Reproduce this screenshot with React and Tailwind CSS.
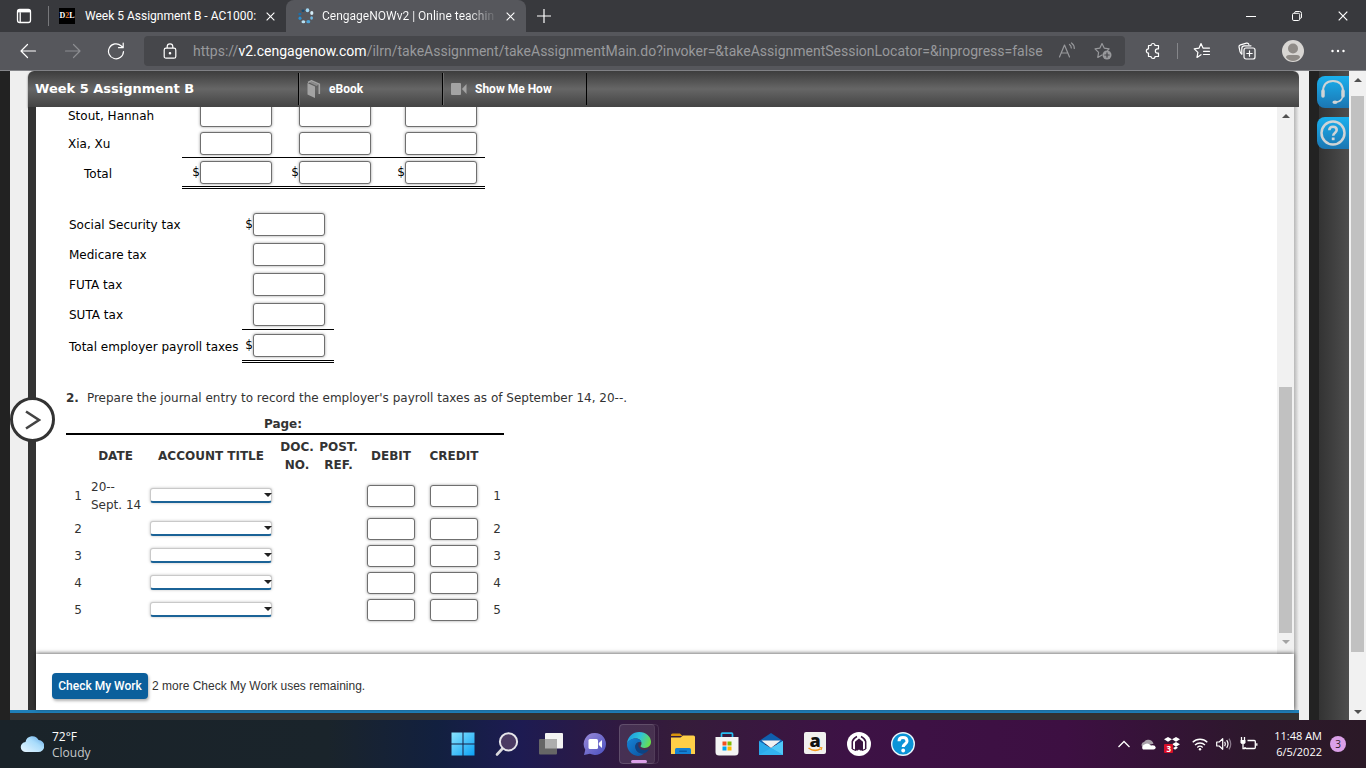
import clsx from "clsx";

const taxRows = [
  { id: "social", label: "Social Security tax", dollar: true },
  { id: "medicare", label: "Medicare tax" },
  { id: "futa", label: "FUTA tax" },
  { id: "suta", label: "SUTA tax" },
  { id: "total", label: "Total employer payroll taxes", dollar: true, total: true },
];

const earningRows = [
  { name: "Stout, Hannah" },
  { name: "Xia, Xu" },
  { name: "Total", total: true },
];

const journalRows = [1, 2, 3, 4, 5];

const AmountInput = ({ id, label, small }) => (
  <input
    id={id}
    type="text"
    aria-label={label}
    className={clsx(
      "block rounded-[3px] border border-[#6f6f6f] bg-white px-1 shadow-[0_0_3px_rgba(0,0,0,0.4)] outline-none",
      small ? "mx-auto h-[22px] w-12" : "h-[23px] w-[72px]"
    )}
  />
);

const Triangle = ({ up, className }) => (
  <svg viewBox="0 0 8 4" className={clsx("h-1 w-2", className)} fill="currentColor">
    <path d={up ? "M0 4L4 0L8 4Z" : "M0 0L4 4L8 0Z"} />
  </svg>
);

const ScrollButton = ({ up, className }) => (
  <button
    type="button"
    aria-label={up ? "Scroll up" : "Scroll down"}
    className={clsx("flex h-[17px] w-full shrink-0 items-center justify-center", className)}
  >
    <Triangle up={up} />
  </button>
);

/* ---------- browser ---------- */

const CloseIcon = ({ className }) => (
  <svg viewBox="0 0 10 10" className={className} fill="none" stroke="currentColor" strokeWidth="1.2">
    <path d="M.7.7l8.6 8.6M9.3.7L.7 9.3" />
  </svg>
);

const TabStrip = () => (
  <div className="flex h-8 shrink-0 bg-[#38393d] text-white">
    <div className="flex w-12 shrink-0 items-center justify-center">
      <button type="button" aria-label="Tab actions">
        <svg viewBox="0 0 16 16" className="size-4" fill="none" stroke="currentColor" strokeWidth="1.3">
          <rect x="1.5" y="1.5" width="13" height="13" rx="2.2" />
          <path d="M4.200 4.200v10" strokeWidth="1.300" />
          <path d="M2 3.200h12" strokeWidth="2.400" />
        </svg>
      </button>
    </div>
    <div className="flex w-[238px] shrink-0 items-center pr-1.5">
      <span className="mr-2.5 h-5 w-px shrink-0 bg-[#77787b]" />
      <span className="flex size-4 shrink-0 items-center justify-center bg-black font-['Liberation_Serif'] text-[8px] font-bold leading-none text-white">
        D<span className="text-[#e8762d]">2</span>L
      </span>
      <span className="ml-2.5 whitespace-nowrap font-['Roboto'] text-xs">Week 5 Assignment B - AC1000:</span>
      <button type="button" aria-label="Close tab" className="ml-auto flex size-5 items-center justify-center">
        <CloseIcon className="size-[9px]" />
      </button>
    </div>
    <div className="flex w-[240px] shrink-0 items-center rounded-t-lg bg-[#56575c] pl-3 pr-1.5">
      <svg viewBox="0 0 16 16" className="size-4 shrink-0">
        <ellipse cx="9.5" cy="2.2" rx="1.8" ry="2" fill="#9fd6f2" />
        <ellipse cx="13.8" cy="5" rx="1.6" ry="1.9" fill="#d6effa" />
        <ellipse cx="13.6" cy="10" rx="1.4" ry="1.8" fill="#6fb7e0" />
        <ellipse cx="10.3" cy="13.7" rx="2" ry="1.6" fill="#4fa5d8" />
        <ellipse cx="5.4" cy="13.7" rx="1.9" ry="1.5" fill="#b9e2f5" />
        <ellipse cx="2" cy="10.3" rx="1.5" ry="1.8" fill="#2a8fd0" />
        <ellipse cx="1.9" cy="6" rx="1.6" ry="1.2" fill="#1c6ea8" />
        <ellipse cx="5" cy="2.8" rx="1.5" ry="1.3" fill="#174a70" />
      </svg>
      <span className="ml-2 whitespace-nowrap bg-linear-to-r from-white from-85% to-[#6b6c70] bg-clip-text font-['Roboto'] text-xs text-transparent">
        CengageNOWv2 | Online teachin
      </span>
      <button type="button" aria-label="Close tab" className="ml-auto flex size-5 items-center justify-center">
        <CloseIcon className="size-[9px]" />
      </button>
    </div>
    <button type="button" aria-label="New tab" className="flex w-9 items-center justify-center">
      <svg viewBox="0 0 14 14" className="size-3.5" fill="none" stroke="currentColor" strokeWidth="1.2">
        <path d="M7 0v14M0 7h14" />
      </svg>
    </button>
    <div className="ml-auto flex">
      <button type="button" aria-label="Minimize" className="flex w-[46px] items-center justify-center">
        <span className="h-px w-2.5 bg-white" />
      </button>
      <button type="button" aria-label="Restore" className="flex w-[46px] items-center justify-center">
        <svg viewBox="0 0 10 10" className="size-2.5" fill="none" stroke="currentColor" strokeWidth="1">
          <rect x=".5" y="2.3" width="7.2" height="7.2" rx="1.3" />
          <path d="M2.6 2V1.8Q2.6.5 4 .5h3.6Q9.5.5 9.5 2.4V6q0 1.4-1.3 1.4" />
        </svg>
      </button>
      <button type="button" aria-label="Close" className="flex w-[46px] items-center justify-center">
        <CloseIcon className="size-2.5" />
      </button>
    </div>
  </div>
);

const ToolButton = ({ label, children, className }) => (
  <button type="button" aria-label={label} className={clsx("flex shrink-0 items-center justify-center", className)}>
    <svg viewBox="0 0 18 18" className="size-[18px]" fill="none" stroke="currentColor" strokeWidth="1.2" strokeLinejoin="round" strokeLinecap="round">
      {children}
    </svg>
  </button>
);

const Toolbar = () => (
  <div className="flex h-[39px] shrink-0 items-center border-b border-[#85868a] bg-[#56575c] pl-1 text-white">
    <ToolButton label="Back" className="w-12">
      <path d="M16.500 9H2M8.500 2.500L2 9l6.500 6.500" />
    </ToolButton>
    <ToolButton label="Forward" className="w-[42px] text-[#8c8d91]">
      <path d="M1.500 9H16M9.500 2.500L16 9l-6.500 6.500" />
    </ToolButton>
    <ToolButton label="Refresh" className="w-11">
      <path d="M16.500 9.500A7.500 7.500 0 1 1 14 3.700L16 5.500M16.200 1v4.700h-4.700" />
    </ToolButton>
    <div className="ml-1.5 flex h-[30px] min-w-0 flex-1 items-center rounded bg-[#46474b] pl-[19px]">
      <svg viewBox="0 0 14 16" className="h-4 w-3.5 shrink-0" fill="none" stroke="currentColor" strokeWidth="1.2">
        <rect x="1.200" y="5.200" width="11.600" height="10" rx="1.800" />
        <path d="M4.200 5V3.600a2.800 2.800 0 0 1 5.600 0V5" />
        <circle cx="7" cy="10.200" r=".7" fill="currentColor" />
      </svg>
      <div className="ml-4 min-w-0 flex-1 overflow-hidden whitespace-nowrap font-['Roboto'] text-sm text-[#98999c]">
        https://<span className="text-white">v2.cengagenow.com</span>
        /ilrn/takeAssignment/takeAssignmentMain.do?invoker=&amp;takeAssignmentSessionLocator=&amp;inprogress=false
      </div>
      <ToolButton label="Read aloud" className="w-9 text-[#98999c]">
        <path d="M1.500 15L6.500 3l5 12M3.200 11h6.600M11.500 2.500q1.800 1.300 1.800 3.500M13.500 1q2.800 2 2.800 5.500" />
      </ToolButton>
      <ToolButton label="Add to favorites" className="mr-1 w-9 text-[#98999c]">
        <path d="M8 13L3.800 15.400l.8-5L1 6.900l4.900-.8L8 1.500l2.200 4.600 4.900.8-1.500 1.500" />
        <circle cx="13" cy="13" r="4.500" fill="currentColor" stroke="none" />
        <path d="M13 10.800v4.400M10.800 13h4.400" stroke="#46474b" />
      </ToolButton>
    </div>
    <ToolButton label="Extensions" className="ml-1.5 w-11">
      <path d="M4.500 3.500H7a2 2 0 0 1 4 0h3.500v3.300h-1a2 2 0 0 0 0 4.300h1v3.400H11a2 2 0 0 1-4 0H4.500v-3.400a2 2 0 0 1 0-4.300Z" />
    </ToolButton>
    <span className="mx-0.5 h-4 w-px bg-[#85868a]" />
    <ToolButton label="Favorites" className="w-11">
      <path d="M8 12.700L4 15.400l.9-5L1.200 6.900l4.900-.8L8 1.500l2 4.600h6.500M10.500 9.300h6M10.500 12.500h6" />
    </ToolButton>
    <ToolButton label="Collections" className="w-[46px]">
      <rect x="6" y="6" width="11" height="11" rx="2" />
      <path d="M11.500 8.800v5.400M8.800 11.500h5.400M3.800 12Q2.300 11 2 9.600L1 4.800Q.8 3.200 2.400 2.800L8.500 1.200q1.800-.4 2.400 1.300" />
      <path d="M3.800 12V6.500q0-2.700 2.700-2.700H13" />
    </ToolButton>
    <button type="button" aria-label="Profile" className="flex w-[46px] justify-center">
      <svg viewBox="0 0 22 22" className="size-[22px]">
        <circle cx="11" cy="11" r="11" fill="#d8d6d3" />
        <circle cx="11" cy="8.500" r="5" fill="#8f8b87" />
        <path d="M4 17.500q0-2.500 3-2.500h8q3 0 3 2.500A9 9 0 0 1 11 21a9 9 0 0 1-7-3.500Z" fill="#8f8b87" />
      </svg>
    </button>
    <ToolButton label="Settings and more" className="mr-1.5 w-11">
      <path d="M3.500 9h.01M9 9h.01M14.500 9h.01" strokeWidth="2.400" />
    </ToolButton>
  </div>
);

/* ---------- assignment ---------- */

const HeaderLink = ({ icon, children }) => (
  <a
    href="#"
    className="flex w-36 items-center gap-2 border-l border-black pl-2 font-['Roboto'] text-xs font-bold shadow-[inset_1px_0_0_#6b6b6b]"
  >
    {icon}
    {children}
  </a>
);

const AppHeader = () => (
  <header className="flex h-9 shrink-0 rounded-t-md bg-linear-to-b from-[#3d3d3d] via-[#666] to-[#444] py-0.5 text-white shadow-[0_1px_2px_rgba(0,0,0,0.6)]">
    <h1 className="flex w-[270px] items-center pl-[7px] font-['DejaVu_Sans',Verdana,sans-serif] text-[13px] font-bold">
      Week 5 Assignment B
    </h1>
    <HeaderLink
      icon={
        <svg viewBox="0 0 14 18" className="h-[18px] w-3.5">
          <path d="M.5 3L8 6.500V18L.5 14.500Z" fill="#a3a3a3" />
          <path d="M1 2.500L4.500 .800l7.800 3.500V14" fill="none" stroke="#a3a3a3" strokeWidth="1.600" />
          <path d="M2 2.500L4.500 1.500 12 4.500 9.500 6Z" fill="#8a8a8a" />
        </svg>
      }
    >
      eBook
    </HeaderLink>
    <HeaderLink
      icon={
        <svg viewBox="0 0 16 12" className="h-3 w-4" fill="#a3a3a3">
          <rect y="0" width="10" height="12" rx="1" />
          <path d="M11 6l4.500-5v10Z" />
        </svg>
      }
    >
      Show Me How
    </HeaderLink>
    <span className="border-l border-black" />
  </header>
);

const EarningsTable = () => (
  <table className="ml-0.5 w-[417px] table-fixed border-separate border-spacing-0 text-black">
    <colgroup>
      <col className="w-[114px]" />
      <col className="w-[90px]" />
      <col className="w-[99px]" />
      <col className="w-[114px]" />
    </colgroup>
    <tbody>
      {earningRows.map((row) => (
        <tr key={row.name}>
          <th scope="row" className={clsx("pt-0.5 text-left font-normal", row.total && "pl-4")}>
            {row.name}
          </th>
          {[1, 2, 3].map((col) => (
            <td
              key={col}
              className={clsx(
                row.total ? "h-8 border-t border-b-3 border-t-black border-b-black [border-bottom-style:double]" : "h-7",
                col === 3 && "pr-2"
              )}
            >
              <div className="flex items-center justify-end">
                {row.total && "$"}
                <AmountInput label={`${row.name}, column ${col}`} />
              </div>
            </td>
          ))}
        </tr>
      ))}
    </tbody>
  </table>
);

const TaxTable = () => (
  <table className="mt-5 ml-[3px] w-[265px] table-fixed border-separate border-spacing-0 text-black">
    <colgroup>
      <col className="w-[173px]" />
      <col className="w-[92px]" />
    </colgroup>
    <tbody>
      {taxRows.map((row) => (
        <tr key={row.id}>
          <th scope="row" className="whitespace-nowrap pt-0.5 text-left font-normal">
            <label htmlFor={row.id}>{row.label}</label>
          </th>
          <td
            className={clsx(
              "pr-[9px]",
              row.total ? "h-[34px] border-t border-b-3 border-t-black border-b-black [border-bottom-style:double]" : "h-[30px]"
            )}
          >
            <div className="flex items-center justify-end">
              {row.dollar && "$"}
              <AmountInput id={row.id} />
            </div>
          </td>
        </tr>
      ))}
    </tbody>
  </table>
);

const AccountSelect = ({ row }) => (
  <div className="relative mx-auto h-[15px] w-[122px]">
    <select
      aria-label={`Account title, line ${row}`}
      className="block h-full w-full appearance-none rounded-[3px] border border-b-2 border-[#c9c9c9] border-b-[#1b6397] bg-white shadow-[0_0_3px_rgba(0,0,0,0.25)] outline-none"
    />
    <Triangle className="pointer-events-none absolute top-[5px] right-0 text-[#222]" />
  </div>
);

const JournalTable = () => (
  <table className="w-[438px] table-fixed border-separate border-spacing-0 border-t-2 border-black text-center">
    <caption className="pt-2 pr-1 font-bold">Page:</caption>
    <colgroup>
      <col className="w-[19px]" />
      <col className="w-[61px]" />
      <col className="w-[130px]" />
      <col className="w-[42px]" />
      <col className="w-[41px]" />
      <col className="w-16" />
      <col className="w-[62px]" />
      <col className="w-[19px]" />
    </colgroup>
    <thead>
      <tr className="h-[41px]">
        <td />
        <th>DATE</th>
        <th>ACCOUNT TITLE</th>
        <th>DOC. NO.</th>
        <th>POST. REF.</th>
        <th>DEBIT</th>
        <th>CREDIT</th>
        <td />
      </tr>
    </thead>
    <tbody>
      {journalRows.map((row) => (
        <tr key={row} className={row === 1 ? "h-[39px]" : "h-[27px]"}>
          <td className="pr-[3px] text-right">{row}</td>
          <td className="whitespace-nowrap pl-1.5 text-left">
            {row === 1 && (
              <>
                20--
                <br />
                Sept. 14
              </>
            )}
          </td>
          <td>
            <AccountSelect row={row} />
          </td>
          <td />
          <td />
          <td>
            <AmountInput small label={`Debit, line ${row}`} />
          </td>
          <td>
            <AmountInput small label={`Credit, line ${row}`} />
          </td>
          <td className="pr-[3px] text-right">{row}</td>
        </tr>
      ))}
    </tbody>
  </table>
);

const Assignment = () => (
  <main className="flex min-w-0 flex-1 flex-col bg-[#efefef]">
    <div className="flex min-h-0 flex-1 flex-col pl-[18px]">
      <AppHeader />
      <div className="flex min-h-0 flex-1 flex-col border-l-8 border-[#333] bg-linear-to-l from-[#efefef] to-[#b8b8b8] to-[5px] pr-[5px]">
        <div className="flex min-h-0 flex-1 bg-white">
          {/* scrolled to the end of the question */}
          <div className="flex min-w-0 flex-1 flex-col justify-end overflow-hidden pb-[31px] pl-[30px] font-['DejaVu_Sans',Verdana,sans-serif] text-xs leading-[18px] text-[#333]">
            <EarningsTable />
            <TaxTable />
            <p className="mt-[26px]">
              <b className="mr-2">2.</b>
              Prepare the journal entry to record the employer's payroll taxes as of September 14, 20--.
            </p>
            <JournalTable />
          </div>
          <div className="flex w-[17px] flex-col bg-[#f1f1f1] px-0.5 pb-1">
            <ScrollButton up className="text-[#505050]" />
            <span className="grow-[263]" />
            <span className="grow-[246] bg-[#c1c1c1]" />
            <ScrollButton className="text-[#a3a3a3]" />
          </div>
        </div>
        <div className="relative flex h-14 shrink-0 items-center gap-1 bg-white pt-2 pl-4 font-['Liberation_Sans'] text-xs text-[#333] shadow-[0_-1px_4px_rgba(0,0,0,0.55)]">
          <button
            type="button"
            className="h-[26px] w-24 whitespace-nowrap rounded bg-[#0b5f9c] font-['Roboto'] text-xs font-medium text-white shadow-[1px_2px_3px_rgba(0,0,0,0.3)]"
          >
            Check My Work
          </button>
          2 more Check My Work uses remaining.
        </div>
      </div>
    </div>
    <div className="h-2.5 shrink-0 border-t-3 border-[#1f7fb8] bg-[#333]" />
  </main>
);

const SideTabs = () => (
  <aside className="relative flex w-10 shrink-0 flex-col items-end gap-[9px] border-l-10 border-[#222] bg-linear-to-r from-[#333] to-[#4e4e4e] pt-[5px]">
    <button type="button" aria-label="Support" className="-ml-0.5 flex h-8 w-8 shrink-0 items-center justify-center rounded-l-lg bg-linear-to-b from-[#19b0ee] to-[#1b76b2]">
      <svg viewBox="0 0 26 26" className="size-[26px]" fill="none" stroke="#d0d4d6" strokeWidth="2">
        <path d="M3 13C3 6 6.500 2 13 2s10 4 10 11" />
        <path d="M3 12v5M23 12v5" strokeWidth="3.500" strokeLinecap="round" />
        <path d="M22.500 18q-1 4.500-6 5" strokeWidth="1.500" />
        <ellipse cx="15" cy="23.300" rx="2.600" ry="1.700" fill="#d0d4d6" stroke="none" />
      </svg>
    </button>
    <button type="button" aria-label="Help" className="-ml-0.5 flex h-8 w-8 shrink-0 items-center justify-center rounded-l-lg bg-linear-to-b from-[#19b0ee] to-[#1b76b2]">
      <svg viewBox="0 0 26 26" className="size-[26px]" fill="none" stroke="#d0d4d6">
        <circle cx="13" cy="13" r="11.500" strokeWidth="2.500" />
        <path d="M9.300 10.300Q9.300 6.800 13 6.800t3.700 3.300c0 2.600-3.500 2.600-3.500 5.700" strokeWidth="2.600" />
        <path d="M13.200 17.500v2.700" strokeWidth="2.800" />
      </svg>
    </button>
  </aside>
);

/* ---------- taskbar ---------- */

const TaskIcon = ({ label, active, children }) => (
  <button type="button" aria-label={label} className="relative flex h-full w-11 shrink-0 items-center justify-center">
    {active && (
      <>
        <span className="absolute inset-y-1 left-0.5 w-10 rounded border border-white/10" />
        <span className="absolute inset-y-1 left-0.5 w-9 rounded border border-white/5 bg-white/10" />
        <span className="absolute bottom-[5px] h-[3px] w-4 rounded-full bg-[#dba0e8]" />
      </>
    )}
    <svg viewBox="0 0 24 24" className="relative size-6 overflow-visible">
      {children}
    </svg>
  </button>
);

const Taskbar = () => (
  <footer className="flex h-12 shrink-0 items-center bg-[linear-gradient(90deg,#1a2329_0%,#1a242b_24%,#12203f_32%,#1d1b52_38%,#32193f_46%,#351c3a_50%,#3d1245_62%,#3d0f42_78%,#2c182b_92%,#2b1927_100%)] text-white">
    <button type="button" className="flex flex-1 items-center gap-2 pl-5 text-left text-xs leading-4">
      <svg viewBox="0 0 24 18" className="h-[18px] w-6">
        <defs>
          <linearGradient id="cloud" x1="0" y1="1" x2="1" y2="0">
            <stop offset="0" stopColor="#e9f6ff" />
            <stop offset="0.600" stopColor="#a9dcfb" />
            <stop offset="1" stopColor="#5a9fe0" />
          </linearGradient>
        </defs>
        <path d="M6 17a5 5 0 0 1-.5-10A7 7 0 0 1 18.600 5 6 6 0 0 1 18 17Z" fill="url(#cloud)" />
      </svg>
      <span className="pt-0.5">
        72°F
        <br />
        <span className="text-[#c6c9cb]">Cloudy</span>
      </span>
    </button>
    <nav className="flex h-full">
      <TaskIcon label="Start">
        <defs>
          <linearGradient id="win" x1="0" y1="0" x2="1" y2="1">
            <stop offset="0" stopColor="#8be4ff" />
            <stop offset="1" stopColor="#0ba1f5" />
          </linearGradient>
        </defs>
        <path d="M0.500 .5h11v11h-11zM12.500 .5h11v11h-11zM.5 12.500h11v11h-11zM12.500 12.500h11v11h-11z" fill="url(#win)" />
      </TaskIcon>
      <TaskIcon label="Search">
        <path d="M8 16L2 22.500" stroke="#d9d9dc" strokeWidth="2.600" strokeLinecap="round" />
        <circle cx="13.500" cy="9.800" r="8.600" fill="#4b3b63" stroke="#e6e6ea" strokeWidth="2" />
      </TaskIcon>
      <TaskIcon label="Task view">
        <rect x="6" y="1" width="18" height="15.500" rx="1" fill="#f3f3f3" />
        <rect x="0" y="7" width="18" height="15.500" rx="1" fill="#666" />
        <rect x="6" y="7" width="12" height="9.500" fill="#adadad" />
      </TaskIcon>
      <TaskIcon label="Chat">
        <defs>
          <linearGradient id="chat" x1="0" y1="0" x2="1" y2="1">
            <stop offset="0" stopColor="#9a8ad8" />
            <stop offset="1" stopColor="#4a50c0" />
          </linearGradient>
        </defs>
        <path d="M12 1a11 11 0 1 1-5 20.800L1 23l1.300-5.300A11 11 0 0 1 12 1Z" fill="url(#chat)" />
        <rect x="5.500" y="7" width="9.500" height="10" rx="1.500" fill="#fff" />
        <path d="M15.800 11l3.200-3v8l-3.200-3Z" fill="#fff" />
      </TaskIcon>
      <TaskIcon label="Edge" active>
        <defs>
          <linearGradient id="edgeTop" x1="0" y1="0.300" x2="1" y2="0.600">
            <stop offset="0" stopColor="#1b9be0" />
            <stop offset="0.500" stopColor="#2fc3d8" />
            <stop offset="1" stopColor="#6be047" />
          </linearGradient>
          <linearGradient id="edgeLow" x1="0" y1="0" x2="1" y2="1">
            <stop offset="0" stopColor="#1583d6" />
            <stop offset="1" stopColor="#0c54a0" />
          </linearGradient>
        </defs>
        <path d="M0 12C.3 4.500 6 0 12.300 0 19 0 24 4.600 24 9.800c0 4-3 6.200-6.300 6.200-2.700 0-4.200-1-4.200-1.900 0-.7 1-1 1-2.900C14.500 8.500 12 6.500 8.700 6.500 4.500 6.500 1 9 0 12Z" fill="url(#edgeTop)" />
        <path d="M0 12C1 8.500 4.500 6.500 8.700 6.500c3 0 5.200 1.700 5.700 3.800-4.300-1-6.600 2.400-5.900 5.700.7 3.600 4.600 6.200 8.800 5.300-2 1.800-4 2.700-6.300 2.700C4.500 23.500-.2 18 0 12Z" fill="url(#edgeLow)" />
        <path d="M8.500 16c-.7-3 1-5.700 4-6-1.600 1.500-1.800 4-.3 6 2.200 2.600 6.300 2.800 9.800 1-1 2-3 3.700-4.700 4.300-4.200 1-8.200-1.700-8.800-5.300Z" fill="#0b4384" />
      </TaskIcon>
      <TaskIcon label="File Explorer">
        <path d="M0 3Q0 1.500 1.500 1.500H9L11.500 4H0Z" fill="#d9930d" />
        <path d="M0 5.500h9.500L12 3.500h10.500Q24 3.500 24 5v17H0Z" fill="#ffcf48" />
        <path d="M4 22v-4.500Q4 16 5.500 16h13q1.500 0 1.500 1.500V22Z" fill="#1380d3" />
        <rect x="8" y="18.500" width="8" height="1.500" rx=".7" fill="#0a5aa5" />
      </TaskIcon>
      <TaskIcon label="Microsoft Store">
        <path d="M6.500 6V2q0-.8.800-.8h9.400q.8 0 .8.800v4" fill="none" stroke="#27bdf0" strokeWidth="1.700" />
        <path d="M.5 5h23v15q0 3.500-3.500 3.500H4Q.5 23.500.5 20Z" fill="#f4f4f4" />
        <path d="M7.500 9.500h4v4h-4z" fill="#f25022" />
        <path d="M12.500 9.500h4v4h-4z" fill="#7fba00" />
        <path d="M7.500 14.500h4v4h-4z" fill="#00a4ef" />
        <path d="M12.500 14.500h4v4h-4z" fill="#ffb900" />
      </TaskIcon>
      <TaskIcon label="Mail">
        <path d="M0 9L12 1l12 8v3H0Z" fill="#0f5fae" />
        <path d="M0 9l12 7L24 9v14H0Z" fill="#2ba9ea" />
        <path d="M12 16L24 9v14Z" fill="#50c8f7" />
        <path d="M0 23L12 16l12 7Z" fill="#33b2ef" />
        <path d="M2.500 8.500h19L12 16Z" fill="#f2f2f2" />
      </TaskIcon>
      <TaskIcon label="Amazon">
        <rect x="1" y="0" width="22" height="22" rx="2" fill="#f1f1ef" />
        <text x="12" y="14.500" textAnchor="middle" fontFamily="Open Sans, sans-serif" fontWeight="800" fontSize="18" fill="#111">a</text>
        <path d="M5.500 16q6 4.300 12 .8" fill="none" stroke="#f79a1d" strokeWidth="1.500" />
        <path d="M16.500 15.500l2.300.2-.8 2.300" fill="none" stroke="#f79a1d" strokeWidth="1.200" />
      </TaskIcon>
      <TaskIcon label="Security app">
        <circle cx="12" cy="12" r="12" fill="#fff" />
        <path d="M5.300 17V9.500Q6 6.500 10 4.500M18.700 17V9.500Q18 6.500 14 4.500" fill="none" stroke="#38123f" strokeWidth="1.500" />
        <path d="M8 18.500V9.800L12 6.500l4 3.300v8.700h-2.800L12 17.500l-1.200 1Z" fill="#38123f" />
        <path d="M5.300 17l3.500 1.500M18.700 17l-3.500 1.500" stroke="#38123f" strokeWidth="1.200" />
      </TaskIcon>
      <TaskIcon label="Get Help">
        <circle cx="12" cy="12" r="11.300" fill="#0a93d8" stroke="#e9f4fa" strokeWidth="1.400" />
        <path d="M8 9.300Q8 5.500 12 5.500T16 9.200c0 2.800-3.800 2.900-3.800 5.800" fill="none" stroke="#fff" strokeWidth="3" />
        <circle cx="12.200" cy="18.500" r="1.900" fill="#fff" />
      </TaskIcon>
    </nav>
    <div className="flex flex-1 items-center justify-end pr-5">
      <svg viewBox="0 0 12 8" className="mr-2.5 h-2 w-3" fill="none" stroke="#fff" strokeWidth="1.300">
        <path d="M.5 7L6 1.500 11.500 7" />
      </svg>
      <svg viewBox="0 0 16 11" className="mr-2 h-[11px] w-4">
        <path d="M2 7.500a3 3 0 0 1 2-4.500Q6 0 9 .800q3.500.7 4.500 4Z" fill="#a9a1aa" />
        <path d="M3 10.500A2.900 2.900 0 0 1 3.500 6Q6.500 3.500 9 5l2 1.500Q15 5.500 15.800 8.600 15.500 10.500 13.500 10.500Z" fill="#fff" />
      </svg>
      <span className="relative mr-3 size-4">
        <svg viewBox="0 0 16 16" className="size-4" fill="#fff">
          <path d="M4 1l4 2.300L4 5.700 0 3.300ZM12 1l4 2.300-4 2.400-4-2.400ZM12 6l4 2.300-4 2.500-4-2.500ZM9 12l3-1.500 2 1.200-3 2Z" />
        </svg>
        <span className="absolute bottom-[-1px] left-0 size-[9px] rounded-[1px] bg-[#d80f2a] text-center text-[8px] font-bold leading-[9px]">3</span>
      </span>
      <svg viewBox="0 0 16 14" className="mr-2 h-3.5 w-4" fill="none" stroke="#fff" strokeWidth="1.300">
        <path d="M.7 5.300a10.300 10.300 0 0 1 14.600 0M3 8a7.200 7.200 0 0 1 10 0M5.300 10.400a4 4 0 0 1 5.400 0" />
        <circle cx="8" cy="12.300" r="1.200" fill="#fff" stroke="none" />
      </svg>
      <svg viewBox="0 0 16 14" className="mr-2 h-3.5 w-4" fill="none" stroke="#fff" strokeWidth="1.200">
        <path d="M.7 5h2.500L6.700 1.700v10.600L3.200 9H.7Z" strokeLinejoin="round" />
        <path d="M8.700 4.800q1.300 2.200 0 4.400M10.700 3.200q2.600 3.800 0 7.600" />
        <path d="M13 1.700q3.500 5.300 0 10.600" stroke="#8a7a8c" />
      </svg>
      <svg viewBox="0 0 18 14" className="mr-4 h-3.5 w-[18px]" fill="none" stroke="#fff" strokeWidth="1.300">
        <path d="M7.500 3.500h6.800q1 0 1 1v6q0 1-1 1H6q-1 0-1-1V10M16.800 6.200v2.600M1.500 0v3M4.500 0v3M3 7v4.500h2" />
        <path d="M.5 3h5v2.500q0 1.500-2.500 1.500T.5 5.500Z" fill="#fff" stroke="none" />
      </svg>
      <div className="mr-2 whitespace-nowrap text-right text-[11px] leading-4">
        11:48 AM
        <br />
        6/5/2022
      </div>
      <span className="flex size-4 items-center justify-center rounded-full bg-[#dba0e8] text-[10px] text-[#2b1927]">3</span>
    </div>
  </footer>
);

const App = () => {
  return (
    <div className="flex h-screen flex-col overflow-hidden font-['Open_Sans','Noto_Sans',sans-serif]">
      <TabStrip />
      <Toolbar />
      <div className="relative flex min-h-0 flex-1 bg-[#222] pl-2.5">
        <Assignment />
        <div className="w-2.5 shrink-0 bg-[#efefef]" />
        <SideTabs />
        <div className="flex w-[17px] shrink-0 flex-col bg-[#f1f1f1] px-0.5">
          <ScrollButton up className="text-[#505050]" />
          <span className="grow-[8]" />
          <span className="grow-[556] bg-[#c1c1c1]" />
          <span className="grow-[51]" />
          <ScrollButton className="text-[#505050]" />
        </div>
        <button
          type="button"
          aria-label="Open navigation"
          className="absolute top-[326px] left-2.5 flex size-[45px] items-center justify-center rounded-full border-3 border-[#333] bg-white"
        >
          <svg viewBox="0 0 16 20" className="h-5 w-4" fill="none" stroke="#444" strokeWidth="2.600">
            <path d="M1 1.500L14 10 1 18.500" />
          </svg>
        </button>
      </div>
      <Taskbar />
    </div>
  );
};

export default App;
